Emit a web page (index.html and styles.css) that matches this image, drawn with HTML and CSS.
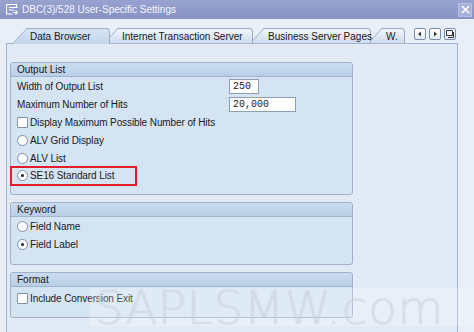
FILE: index.html
```html
<!DOCTYPE html>
<html>
<head>
  <title>DBC(3)/528 User-Specific Settings</title>
  <link rel="stylesheet" href="styles.css">
</head>
<body>
  <div class="window">
    <!-- Title bar -->
    <div class="titlebar">
      <svg class="title-icon" width="12" height="11" viewBox="0 0 12 11">
        <path d="M0.5 0.5h10v2.5M0.5 0.5v9.5h6" fill="none" stroke="#fff" stroke-width="1.2"/>
        <path d="M3 3.5h8.5M3 6h5" fill="none" stroke="#fff" stroke-width="1.2"/>
        <path d="M7 8.5h4.5M9.5 6.5l2 2-2 2" fill="none" stroke="#fff" stroke-width="1.1"/>
      </svg>
      <span class="title-text">DBC(3)/528 User-Specific Settings</span>
      <span class="close">
        <svg width="9" height="9" viewBox="0 0 9 9">
          <path d="M1 1l7 7M8 1l-7 7" stroke="#fff" stroke-width="1.6"/>
        </svg>
      </span>
    </div>

    <div class="main">
      <!-- Tab strip -->
      <div class="tabstrip">
        <div class="tabs">
          <div class="tab active tab-data">Data Browser</div>
          <div class="tab tab-its">Internet Transaction Server</div>
          <div class="tab tab-bsp">Business Server Pages</div>
          <div class="tab tab-w">W.</div>
        </div>
        <div class="tab-nav">
          <span class="nav-btn">
            <svg width="10" height="10" viewBox="0 0 10 10"><path d="M6 2.5v5L3 5z" fill="#333"/></svg>
          </span>
          <span class="nav-btn">
            <svg width="10" height="10" viewBox="0 0 10 10"><path d="M4 2.5v5L7 5z" fill="#333"/></svg>
          </span>
          <span class="nav-btn">
            <svg width="10" height="10" viewBox="0 0 10 10"><path d="M1.5 1.5h6v5h-6z M3 8.5h5.5V3" fill="none" stroke="#333" stroke-width="1"/></svg>
          </span>
        </div>
      </div>

      <!-- Tab content -->
      <div class="panel">
        <div class="group group-output">
          <div class="group-head">Output List</div>
          <div class="group-body">
            <div class="row">
              <span class="label">Width of Output List</span>
              <span class="field w-short">250</span>
            </div>
            <div class="row">
              <span class="label">Maximum Number of Hits</span>
              <span class="field w-long">20,000</span>
            </div>
            <div class="row">
              <span class="check"></span>Display Maximum Possible Number of Hits
            </div>
            <div class="row">
              <span class="radio"></span>ALV Grid Display
            </div>
            <div class="row">
              <span class="radio"></span>ALV List
            </div>
            <div class="row">
              <span class="radio on"></span>SE16 Standard List
              <span class="mark"></span>
            </div>
          </div>
        </div>

        <div class="group group-keyword">
          <div class="group-head">Keyword</div>
          <div class="group-body">
            <div class="row"><span class="radio"></span>Field Name</div>
            <div class="row"><span class="radio on"></span>Field Label</div>
          </div>
        </div>

        <div class="group group-format">
          <div class="group-head">Format</div>
          <div class="group-body">
            <div class="row"><span class="check"></span>Include Conversion Exit</div>
          </div>
        </div>
      </div>
    </div>

    <div class="band"></div>
    <div class="watermark">SAPLSMW.com</div>
  </div>
</body>
</html>
```

FILE: styles.css
```css
* {
  box-sizing: border-box;
}

body {
  margin: 0;
  background-color: #e8eff7;
  font-family: "Liberation Sans", Arial, sans-serif;
  font-size: 10px;
  color: #1a1a1a;
}

.window {
  position: relative;
  width: 474px;
  height: 332px;
  overflow: hidden;
}

/* Title bar */
.titlebar {
  height: 19px;
  display: flex;
  align-items: center;
  padding: 0 2px 0 6px;
  background: linear-gradient(to bottom, #97a2cf, #8893c4);
  color: #f4f5fb;
}

.title-icon {
  margin-right: 4px;
}

.title-text {
  flex: 1;
  font-size: 10px;
}

.close {
  width: 14px;
  height: 14px;
  display: flex;
  align-items: center;
  justify-content: center;
  background-color: #a7b1da;
  border: 1px solid #b7c0e3;
}

/* Tabs */
.main {
  padding: 9px 0 0 6px;
}

.tabstrip {
  display: flex;
  height: 15px;
}

.tabs {
  display: flex;
  padding-left: 21px;
}

.tab {
  position: relative;
  height: 15px;
  padding: 2px 0 0 3px;
  border-top: 1px solid #9aabc3;
  border-right: 1px solid #9aabc3;
  border-top-right-radius: 4px;
  background: linear-gradient(to bottom, #f1f5fa, #cddbec);
  font-size: 10px;
  white-space: nowrap;
}

.tab::before {
  content: '';
  position: absolute;
  left: -15px;
  top: -1px;
  bottom: 0;
  width: 18px;
  background: linear-gradient(to bottom, #f1f5fa, #cddbec);
  border-left: 1px solid #9aabc3;
  border-top: 1px solid #9aabc3;
  transform: skewX(-43deg);
  transform-origin: bottom left;
  z-index: -1;
}

.tab.active {
  z-index: 2;
  height: 16px;
  background: linear-gradient(to bottom, #d7e4f2, #c2d5ea);
}

.tab.active::before {
  background: linear-gradient(to bottom, #d7e4f2, #c2d5ea);
}

.tab-data { width: 83px; }
.tab-its  { width: 134px; margin-left: 9px; }
.tab-bsp  { width: 106px; margin-left: 12px; }
.tab-w    { width: 22px; margin-left: 12px; }

.tab-nav {
  display: flex;
  gap: 3px;
  margin-left: 9px;
}

.nav-btn {
  width: 12px;
  height: 12px;
  display: flex;
  align-items: center;
  justify-content: center;
  background: linear-gradient(to bottom, #ffffff, #e4ebf4);
  border: 1px solid #7b8ca5;
  border-radius: 2px;
}

/* Panel */
.panel {
  position: relative;
  z-index: 1;
  width: 452px;
  height: 300px;
  padding: 18px 0 0 3px;
  background-color: #e2ebf5;
  border: 1px solid #a3b4cb;
}

.group {
  width: 343px;
  background-color: #d5e4f3;
  border: 1px solid #9fb2ca;
  border-radius: 3px;
}

.group-head {
  height: 14px;
  padding: 1px 0 0 6px;
  background: linear-gradient(to bottom, #cbdcef, #b9cee7);
  border-bottom: 1px solid #a2b5cd;
  border-radius: 3px 3px 0 0;
}

.group-body {
  padding: 1px 0 9px 6px;
}

.row {
  position: relative;
  height: 17.8px;
  display: flex;
  align-items: center;
  letter-spacing: -0.1px;
}

.group-keyword {
  margin-top: 7px;
}

.group-keyword .row {
  height: 18px;
}

.group-keyword .group-body {
  padding-bottom: 10px;
}

.group-format {
  margin-top: 7px;
}

.group-format .group-body {
  padding-top: 3px;
}

.group-format .row {
  height: 18px;
}

.label {
  width: 212px;
}

.field {
  height: 15px;
  padding: 1px 0 0 3px;
  background-color: #fff;
  border: 1px solid #8d9db4;
  font-family: "Liberation Mono", "Courier New", monospace;
  font-size: 10px;
  letter-spacing: 0;
}

.w-short { width: 30px; }
.w-long  { width: 67px; }

.check {
  width: 11px;
  height: 11px;
  margin-right: 2px;
  background-color: #fff;
  border: 1px solid #7d8ea6;
  border-radius: 1px;
}

.radio {
  position: relative;
  width: 11px;
  height: 11px;
  margin-right: 2px;
  background-color: #fff;
  border: 1px solid #7d8ea6;
  border-radius: 50%;
}

.radio.on::after {
  content: '';
  position: absolute;
  left: 3px;
  top: 3px;
  width: 3px;
  height: 3px;
  border-radius: 50%;
  background-color: #222;
}

/* red annotation around SE16 row */
.mark {
  position: absolute;
  left: -7px;
  top: -1px;
  width: 127px;
  height: 20px;
  border: 2px solid #e21c28;
}

/* watermark */
.band {
  position: absolute;
  left: 90px;
  top: 288px;
  width: 384px;
  height: 38px;
  background-color: rgba(255, 255, 255, 0.22);
  z-index: 3;
}

.watermark {
  position: absolute;
  left: 94px;
  top: 280px;
  z-index: 4;
  font-family: "DejaVu Sans", sans-serif;
  font-size: 47px;
  font-weight: 200;
  letter-spacing: 0.5px;
  color: rgba(255, 255, 255, 0.35);
  text-shadow: 0 0 1px rgba(140, 155, 180, 0.45);
}
```
